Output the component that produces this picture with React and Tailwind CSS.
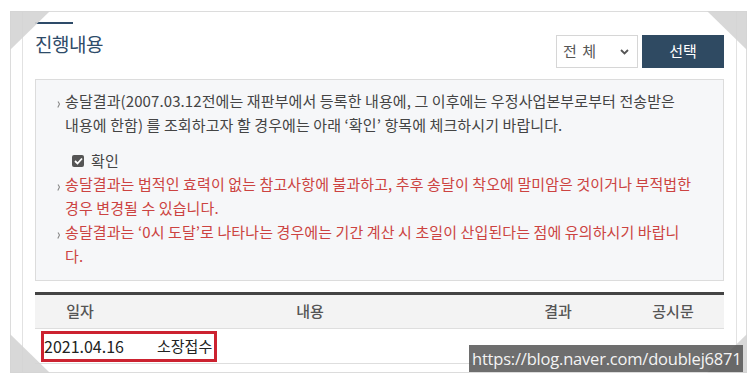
const KR = { fontFamily: '"Noto Sans CJK KR", "Liberation Sans", sans-serif' };

function Bullet() {
  return (
    <svg width="6" height="7" viewBox="0 0 6 7" className="shrink-0 mt-[12px] mr-[3px]">
      <path d="M2 0.5 L3.5 3 L1.8 6.5" stroke="#8a8a8a" strokeWidth="1.1" fill="none" />
    </svg>
  );
}

function Corner({ className, points }) {
  return (
    <svg width="40" height="40" viewBox="0 0 40 40" className={"absolute z-10 " + className}>
      <polygon points={points} fill="#d4d4d4" fillOpacity="0.9" />
    </svg>
  );
}

export default function App() {
  return (
    <div className="w-[756px] h-[384px] bg-white pt-[11px] pl-[10px] relative overflow-hidden" style={KR}>
      <div className="w-[737px] h-[362px] border border-[#dcdcdc] pl-[11px] pr-[9px] relative">
        <div className="h-full border-x border-[#e2e2e2] px-[12px] pt-[10px]">
          <div className="flex justify-between items-start">
            <div>
              <div className="w-[38px] h-[2px] bg-[#2e4b69]" />
              <h1 className="text-[19px] leading-[22px] text-[#2e4b69] mt-[9px] tracking-[-0.5px]">진행내용</h1>
            </div>
            <div className="flex gap-[4px] mt-[13px]">
              <div className="w-[82px] h-[33px] border border-[#d6d6d6] bg-white flex items-center justify-between pl-[6px] pr-[8px] text-[15px] text-[#555]">
                <span className="tracking-[1px]">전 체</span>
                <svg width="9" height="6" viewBox="0 0 9 6"><path d="M1 1 L4.5 4.5 L8 1" stroke="#555" strokeWidth="1.8" fill="none" /></svg>
              </div>
              <button className="w-[82px] h-[33px] bg-[#2f4a62] text-white text-[15px]">선택</button>
            </div>
          </div>

          <div className="mt-[11px] h-[202px] border border-[#dcdcdc] bg-[#f6f7f9] pl-[20px] pt-[9px] text-[15px] leading-[24px] tracking-[0.1px] text-[#444] whitespace-nowrap">
            <div className="flex">
              <Bullet />
              <p>송달결과(2007.03.12전에는 재판부에서 등록한 내용에, 그 이후에는 우정사업본부로부터 전송받은<br />내용에 한함) 를 조회하고자 할 경우에는 아래 ‘확인’ 항목에 체크하시기 바랍니다.</p>
            </div>
            <label className="flex items-center gap-[7px] ml-[16px] mt-[12px]">
              <span className="w-[12px] h-[12px] rounded-[2px] bg-[#555] flex items-center justify-center">
                <svg width="9" height="8" viewBox="0 0 9 8"><path d="M1 4 L3.5 6.5 L8 1.5" stroke="white" strokeWidth="1.8" fill="none" /></svg>
              </span>
              <span>확인</span>
            </label>
            <div className="flex text-[#cc4341] mt-[-1px]">
              <Bullet />
              <p>송달결과는 법적인 효력이 없는 참고사항에 불과하고, 추후 송달이 착오에 말미암은 것이거나 부적법한<br />경우 변경될 수 있습니다.</p>
            </div>
            <div className="flex text-[#cc4341]">
              <Bullet />
              <p>송달결과는 ‘0시 도달’로 나타나는 경우에는 기간 계산 시 초일이 산입된다는 점에 유의하시기 바랍니<br />다.</p>
            </div>
          </div>

          <div className="mt-[11px] border-t-[3px] border-[#444]">
            <div className="grid grid-cols-[90px_370px_126px_104px] h-[34px] items-center bg-[#f3f3f3] border-b border-[#dedede] text-[15px] text-[#555] font-medium text-center">
              <span>일자</span>
              <span>내용</span>
              <span>결과</span>
              <span>공시문</span>
            </div>
            <div className="h-[35px] border-b border-[#dedede] flex items-center">
              <div className="ml-[6px] w-[176px] h-[31px] border-[3px] border-[#cc2230] flex items-center text-[#222]">
                <span className="w-[113px] text-[16px]">2021.04.16</span>
                <span className="text-[15px]">소장접수</span>
              </div>
            </div>
          </div>
        </div>

        <Corner className="-top-px -left-px" points="0,0 40,0 0,39" />
        <Corner className="-top-px -right-px" points="0,0 40,0 40,39" />
        <Corner className="-bottom-px -left-px" points="0,1 0,40 40,40" />
        <Corner className="-bottom-px -right-px" points="40,1 40,40 0,40" />
      </div>

      <div className="absolute z-20 left-[469px] top-[345px] w-[274px] h-[27px] bg-[#555555]/85 text-[#f4f4f4] text-[16.5px] leading-[27px] pl-[3px] tracking-[-0.2px] whitespace-nowrap" style={{ fontFamily: '"Open Sans", "Liberation Sans", sans-serif' }}>
        https://blog.naver.com/doublej6871
      </div>
    </div>
  );
}
